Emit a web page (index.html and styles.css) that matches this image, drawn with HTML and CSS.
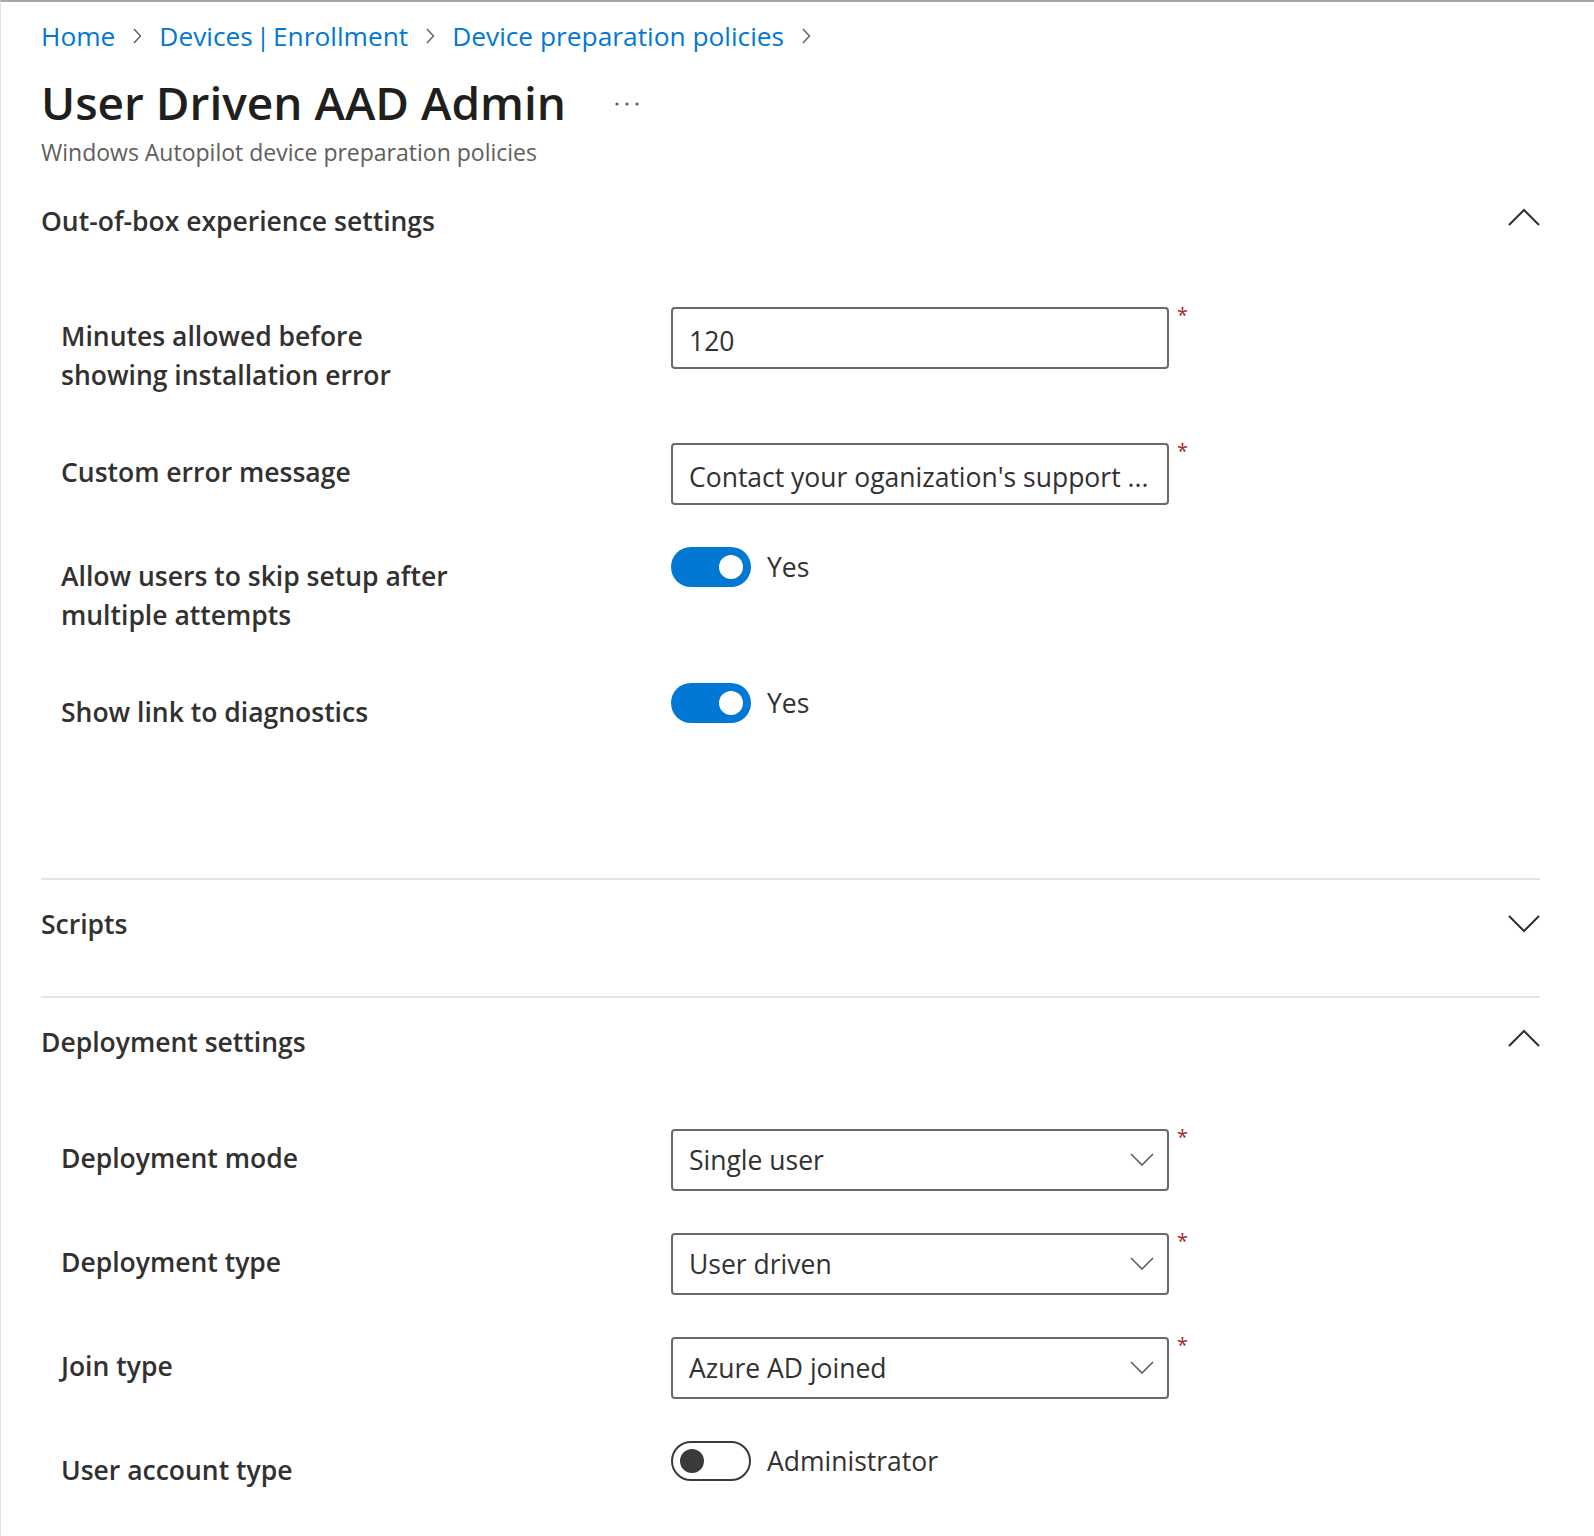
FILE: index.html
```html
<!DOCTYPE html>
<html lang="en">
<head>
<meta charset="utf-8">
<title>User Driven AAD Admin - Device preparation policies</title>
<link rel="stylesheet" href="styles.css">
</head>
<body>
<div class="frame">
  <nav class="breadcrumb" aria-label="Breadcrumb">
    <a href="#" class="crumb">Home</a>
    <svg class="crumb-sep" viewBox="0 0 10 18" aria-hidden="true"><path d="M2 2 L8.5 9 L2 16"/></svg>
    <a href="#" class="crumb crumb-tight">Devices | Enrollment</a>
    <svg class="crumb-sep" viewBox="0 0 10 18" aria-hidden="true"><path d="M2 2 L8.5 9 L2 16"/></svg>
    <a href="#" class="crumb">Device preparation policies</a>
    <svg class="crumb-sep" viewBox="0 0 10 18" aria-hidden="true"><path d="M2 2 L8.5 9 L2 16"/></svg>
  </nav>

  <header class="page-head">
    <h1 class="page-title">User Driven AAD Admin</h1>
    <button class="more" type="button" aria-label="More actions">
      <svg viewBox="0 0 24 4" aria-hidden="true"><circle cx="2" cy="2" r="1.6"/><circle cx="12" cy="2" r="1.6"/><circle cx="22" cy="2" r="1.6"/></svg>
    </button>
  </header>
  <p class="subtitle">Windows Autopilot device preparation policies</p>

  <section class="group group-first">
    <div class="group-head">
      <h2 class="group-title">Out-of-box experience settings</h2>
      <svg class="chev chev-up" viewBox="0 0 32 20" aria-hidden="true"><path d="M1 17 L16 2 L31 17"/></svg>
    </div>
    <div class="group-body">
      <div class="row">
        <div class="row-label">Minutes allowed before<br>showing installation error</div>
        <div class="row-control">
          <div class="field text">120</div>
          <span class="req">*</span>
        </div>
      </div>
      <div class="row">
        <div class="row-label">Custom error message</div>
        <div class="row-control">
          <div class="field text">Contact your oganization's support ...</div>
          <span class="req">*</span>
        </div>
      </div>
      <div class="row">
        <div class="row-label">Allow users to skip setup after<br>multiple attempts</div>
        <div class="row-control">
          <span class="toggle on"><span class="knob"></span></span>
          <span class="toggle-text">Yes</span>
        </div>
      </div>
      <div class="row">
        <div class="row-label">Show link to diagnostics</div>
        <div class="row-control">
          <span class="toggle on"><span class="knob"></span></span>
          <span class="toggle-text">Yes</span>
        </div>
      </div>
    </div>
  </section>

  <section class="group">
    <div class="group-head">
      <h2 class="group-title">Scripts</h2>
      <svg class="chev chev-down" viewBox="0 0 32 20" aria-hidden="true"><path d="M1 2 L16 17 L31 2"/></svg>
    </div>
  </section>

  <section class="group group-last">
    <div class="group-head">
      <h2 class="group-title">Deployment settings</h2>
      <svg class="chev chev-up" viewBox="0 0 32 20" aria-hidden="true"><path d="M1 17 L16 2 L31 17"/></svg>
    </div>
    <div class="group-body">
      <div class="row">
        <div class="row-label">Deployment mode</div>
        <div class="row-control">
          <div class="field select">Single user
            <svg class="select-chev" viewBox="0 0 24 13" aria-hidden="true"><path d="M1 1 L12 12 L23 1"/></svg>
          </div>
          <span class="req">*</span>
        </div>
      </div>
      <div class="row">
        <div class="row-label">Deployment type</div>
        <div class="row-control">
          <div class="field select">User driven
            <svg class="select-chev" viewBox="0 0 24 13" aria-hidden="true"><path d="M1 1 L12 12 L23 1"/></svg>
          </div>
          <span class="req">*</span>
        </div>
      </div>
      <div class="row">
        <div class="row-label">Join type</div>
        <div class="row-control">
          <div class="field select">Azure AD joined
            <svg class="select-chev" viewBox="0 0 24 13" aria-hidden="true"><path d="M1 1 L12 12 L23 1"/></svg>
          </div>
          <span class="req">*</span>
        </div>
      </div>
      <div class="row">
        <div class="row-label">User account type</div>
        <div class="row-control">
          <span class="toggle off"><span class="knob"></span></span>
          <span class="toggle-text">Administrator</span>
        </div>
      </div>
    </div>
  </section>
</div>
</body>
</html>
```

FILE: styles.css
```css
html, body {
  margin: 0;
  padding: 0;
  background: #ffffff;
  overflow: hidden;
}

body {
  font-family: "Open Sans", "Noto Sans", "Liberation Sans", sans-serif;
  color: #323130;
  font-size: 26.5px;
}

.frame {
  box-sizing: border-box;
  height: 1536px;
  border-top: 2px solid #a6a6a6;
  border-left: 1px solid #e3e3e3;
  padding: 16px 54px 0 40px;
}

/* breadcrumb */
.breadcrumb {
  display: flex;
  align-items: center;
  gap: 17px;
  height: 36px;
  font-size: 26.3px;
  line-height: 36px;
}

.crumb {
  color: #0078d4;
  text-decoration: none;
}

.crumb-tight {
  word-spacing: -4px;
}

.crumb-sep {
  width: 10px;
  height: 18px;
  fill: none;
  stroke: #605e5c;
  stroke-width: 1.4;
}

/* title */
.page-head {
  display: flex;
  align-items: center;
  height: 56px;
  margin-top: 19.6px;
}

.page-title {
  margin: 0;
  font-size: 46px;
  line-height: 56px;
  font-weight: 600;
  color: #201f1e;
}

.more {
  margin-left: 49px;
  margin-top: 4px;
  padding: 0;
  border: 0;
  background: none;
  display: flex;
  align-items: center;
  height: 56px;
}

.more svg {
  width: 24px;
  height: 4px;
  fill: #605e5c;
}

.subtitle {
  margin: 6.4px 0 0;
  font-size: 23px;
  line-height: 32px;
  color: #605e5c;
}

/* collapsible groups */
.group {
  border-top: 2px solid #e6e5e4;
}

.group-first {
  margin-top: 6.6px;
  border-top-color: transparent;
}

.group-head {
  box-sizing: border-box;
  height: 116px;
  padding-top: 26px;
  display: flex;
  justify-content: space-between;
  align-items: flex-start;
}

.group-title {
  margin: 0;
  font-size: 26.5px;
  line-height: 36px;
  font-weight: 600;
  color: #323130;
}

.chev {
  width: 32px;
  height: 20px;
  fill: none;
  stroke: #323130;
  stroke-width: 2;
}

.chev-up {
  margin-top: 5px;
}

.chev-down {
  margin-top: 8px;
}

.group-body {
  padding: 14.5px 0 91px 20px;
}

.group-last .group-body {
  padding-bottom: 0;
}

/* setting rows */
.row {
  display: flex;
  min-height: 104px;
}

.group-last .row:last-child {
  min-height: 0;
}

.row-label {
  flex: none;
  width: 610px;
  padding: 10px 0 49px;
  line-height: 38.5px;
  font-weight: 600;
  color: #323130;
}

.group-last .row:last-child .row-label {
  padding-bottom: 0;
}

.row-control {
  display: flex;
  align-items: flex-start;
}

.field {
  box-sizing: border-box;
  width: 498px;
  height: 62px;
  padding: 0 16px;
  border: 2px solid #6b6a69;
  border-radius: 4px;
  display: flex;
  align-items: center;
  justify-content: space-between;
  color: #323130;
  white-space: nowrap;
}

.field.text {
  padding-top: 5px;
}

.select {
  padding-right: 13px;
}

.select-chev {
  width: 24px;
  height: 13px;
  fill: none;
  stroke: #605e5c;
  stroke-width: 1.6;
}

.req {
  margin-left: 8px;
  margin-top: -2px;
  font-size: 20px;
  line-height: 1;
  color: #a4262c;
}

/* toggles */
.toggle {
  box-sizing: border-box;
  width: 80px;
  height: 40px;
  border-radius: 20px;
  display: flex;
  align-items: center;
  flex: none;
}

.toggle .knob {
  width: 24px;
  height: 24px;
  border-radius: 50%;
}

.toggle.on {
  background: #0078d4;
  justify-content: flex-end;
  padding: 0 8px;
}

.toggle.on .knob {
  background: #ffffff;
}

.toggle.off {
  background: #ffffff;
  border: 2px solid #3b3a39;
  justify-content: flex-start;
  padding: 0 7px;
}

.toggle.off .knob {
  background: #3b3a39;
}

.toggle-text {
  margin-left: 16px;
  line-height: 40px;
  color: #323130;
}
```
